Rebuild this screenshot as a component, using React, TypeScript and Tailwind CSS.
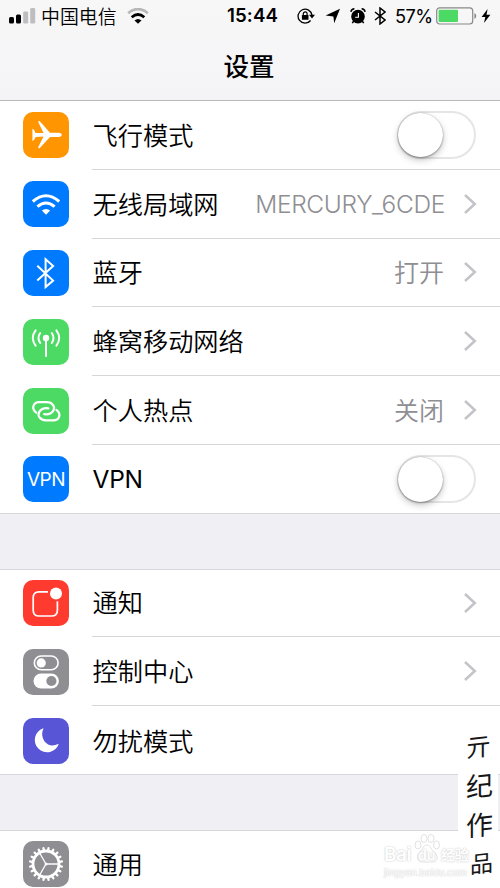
import React from 'react';

const sans = "font-['Inter','Noto_Sans_CJK_SC',sans-serif]";

function StatusBar() {
  return (
    <div className="flex h-8 items-center text-black">
      <svg className="ml-[9px] h-4 w-[27px] shrink-0" viewBox="0 0 27 16">
        <rect x="0" y="9" width="5" height="6.5" rx="1.5" />
        <rect x="7" y="6.5" width="5" height="9" rx="1.5" />
        <rect x="14.2" y="3.5" width="5" height="12" rx="1.3" fill="#bebec0" />
        <rect x="21.2" y="0" width="5" height="15.5" rx="1.3" fill="#bebec0" />
      </svg>
      <span className="ml-[5px] w-[76px] shrink-0 whitespace-nowrap pt-[3px] text-[18.9px] font-[350] leading-8">中国电信</span>
      <svg className="ml-[10px] h-4 w-[22px] shrink-0" viewBox="0 0 22 16">
        <path d="M1.2 5.2C7-.3 15-.3 20.8 5.2" fill="none" stroke="#b7b7b8" strokeWidth="2.7" />
        <path d="M4.7 9.2Q11 3.8 17.3 9.2" fill="none" stroke="#000" strokeWidth="2.8" />
        <path d="M7.5 12.4Q11 9.4 14.5 12.4L11 15.7Z" />
      </svg>
      <span className="ml-[78px] w-[53px] shrink-0 whitespace-nowrap pt-px text-[18.7px] font-semibold tracking-[0.1px]">15:44</span>
      <svg className="ml-[17px] h-4 w-[18px] shrink-0" viewBox="0 0 18 16">
        <path d="M13.6 12.5A7 7 0 1 1 15 7.2" fill="none" stroke="#000" strokeWidth="1.3" />
        <path d="M12 6.7h6L15 10.5Z" />
        <rect x="4.9" y="7" width="6.6" height="4.8" rx=".6" />
        <path d="M6.3 7.3V5.8a1.9 1.9 0 0 1 3.8 0v1.5" fill="none" stroke="#000" strokeWidth="1.2" />
      </svg>
      <svg className="ml-[10px] h-4 w-[16px] shrink-0" viewBox="0 0 16 16">
        <path d="M15 .8 9.2 15.3 8.4 8.4 .6 7.6Z" />
      </svg>
      <svg className="ml-[9px] h-4 w-[16px] shrink-0" viewBox="0 0 16 16">
        <circle cx="8" cy="8.6" r="6.8" />
        <path d="M.9 3.8Q1.4 1 4.4.8M15.1 3.8Q14.6 1 11.6.8M3.8 13l-1.5 2.2M12.2 13l1.5 2.2" stroke="#000" strokeWidth="1.5" fill="none" />
        <path d="M8.4 5v4.3H5.2" fill="none" stroke="#fff" strokeWidth="1.1" />
      </svg>
      <svg className="ml-[8px] h-[18px] w-[12px] shrink-0" viewBox="0 0 12 18">
        <path d="M1 5l10 8-5 4V1l5 4L1 13" fill="none" stroke="#000" strokeWidth="1.5" />
      </svg>
      <span className="ml-[9px] w-[38px] shrink-0 whitespace-nowrap pt-px text-[18.2px] tracking-[-0.5px]">57%</span>
      <svg className="ml-[3px] h-[18px] w-[41px] shrink-0" viewBox="0 0 41 18">
        <rect x=".7" y=".8" width="36" height="16.2" rx="3" fill="none" stroke="#88888a" strokeWidth="1.2" />
        <rect x="2.6" y="2.8" width="19.4" height="12.2" rx="1" fill="#4cd964" />
        <path d="M38.4 6v6q1.9-1 1.9-3t-1.9-3Z" fill="#88888a" />
      </svg>
      <svg className="ml-[4px] h-4 w-[10px] shrink-0" viewBox="0 0 10 16">
        <path d="M6.6 1 .6 9h3.7L3 15 9.4 6.8H5.5Z" />
      </svg>
    </div>
  );
}

function Glyph({ kind }: { kind: string }) {
  const line = { fill: 'none', stroke: '#fff', strokeLinecap: 'round' as const, strokeLinejoin: 'round' as const };
  return (
    <svg className="size-full" viewBox="0 0 46 46" fill="#fff">
      {kind === 'plane' && (
        <path d="M9.4 16.7q1.6.2 3.2 4.2l7.9.2L15.3 10.2q-.3-1.5 1.3-1.3L27 20.7h9q2.9.3 2.9 2.1t-2.9 2.1h-9L16.6 36.2q-1.7.3-1.3-1.2L20.5 24.6l-7.9.3q-1.4 3.6-3.2 4.2Z" />
      )}
      {kind === 'wifi' && (
        <>
          <path {...line} strokeLinecap="butt" strokeWidth="3" d="M9.8 20.5Q23 9 36.2 20.5" />
          <path {...line} strokeLinecap="butt" strokeWidth="3" d="M14.4 25.7Q23 18.3 31.6 25.7" />
          <path d="M18.8 29.6q4.2-3.4 8.4 0L23 33.8Z" />
        </>
      )}
      {kind === 'bluetooth' && <path {...line} strokeLinecap="butt" strokeLinejoin="miter" strokeWidth="2" d="M14.3 15.8l15.8 14.8-7.5 6.4V9.3l7.5 6.7L14.3 30.6" />}
      {kind === 'cell' && (
        <>
          <circle cx="23" cy="19" r="3.2" />
          <path {...line} strokeWidth="2" d="M23 20v17" />
          <path {...line} strokeWidth="2" d="M17.2 14q-3.4 5 0 10M28.8 14q3.4 5 0 10M12.6 11.4q-5.6 7.6 0 15.2M33.4 11.4q5.6 7.6 0 15.2" />
        </>
      )}
      {kind === 'link' && (
        <g {...line} strokeWidth="2.2">
          <path d="M13.2 24.6C8.3 21 9.6 14.2 16.4 14.2h7.2C29.8 14.2 32.6 19 30.2 22.8c-1.8 2.8-4.6 4-9 3.4" />
          <path d="M33.4 21.9C38.3 25.5 37 32.3 30.2 32.3H23C16.8 32.3 14 27.5 16.4 23.7c1.8-2.8 4.6-4 9-3.4" />
        </g>
      )}
      {kind === 'notice' && (
        <>
          <path {...line} strokeLinecap="butt" strokeWidth="1.7" d="M25 11.8H16q-5.8 0-5.8 5.8v12.6q0 5.8 5.8 5.8h12.6q5.8 0 5.8-5.8V21.2" />
          <circle cx="33" cy="13.4" r="6" />
        </>
      )}
      {kind === 'toggles' && (
        <>
          <rect {...line} strokeWidth="1.6" x="11.3" y="7" width="23.8" height="13.8" rx="6.9" />
          <circle cx="18.2" cy="13.9" r="4.6" />
          <rect x="10.5" y="24.5" width="25.4" height="15" rx="7.5" />
          <circle cx="28.4" cy="32" r="5.1" fill="#8e8e93" />
        </>
      )}
      {kind === 'moon' && <path d="M20.5 10.2A12.3 12.3 0 1 0 35.8 25.7Q27 30.2 21.4 23.2 17.4 17.3 20.5 10.2Z" />}
      {kind === 'gear' && (
        <>
          <circle {...line} cx="23" cy="23" r="13" strokeWidth="2.8" />
          <g {...line} strokeWidth="2.3">
            {Array.from({ length: 20 }, (_, i) => (
              <path key={i} d="M23 8.8V6.9" transform={`rotate(${i * 18 + 9} 23 23)`} />
            ))}
          </g>
          <path {...line} strokeWidth="1.3" d="M23 23h13M23 23l-6.5-11.3M23 23l-6.5 11.3" />
          <circle cx="23" cy="23" r="1.5" />
        </>
      )}
    </svg>
  );
}

function Toggle() {
  return (
    <div className="mr-[24px] h-12 w-[79px] rounded-full border-2 border-[#e5e5e6] bg-white">
      <div className="-ml-px size-[44.5px] rounded-full bg-white shadow-[0_3px_7px_rgba(0,0,0,0.23),0_1px_2px_rgba(0,0,0,0.3),0_0_1px_rgba(0,0,0,0.3)]" />
    </div>
  );
}

type RowProps = { kind: string; color: string; label: string; value?: string; toggle?: boolean; arrow?: boolean; last?: boolean };

function Row({ kind, color, label, value, toggle, arrow, last }: RowProps) {
  const latinLabel = kind === 'vpn';
  const latinValue = kind === 'wifi';
  return (
    <div className="flex h-[68.8px] pl-[23px]">
      <div className="flex shrink-0 items-center">
        <div className={`flex size-[46px] items-center justify-center overflow-hidden rounded-[10px] text-white ${color}`}>
          {kind === 'vpn' ? <span className="pt-px text-[19px] font-normal tracking-[-0.6px]">VPN</span> : <Glyph kind={kind} />}
        </div>
      </div>
      <div className={`ml-[23px] flex min-w-0 flex-1 items-center ${last ? '' : 'border-b border-[#d6d6d8]'}`}>
        <span
          className={`flex-1 whitespace-nowrap pl-[0.6px] leading-none text-black ${
            latinLabel ? 'text-[24.5px] tracking-[-0.3px]' : 'pt-[3px] text-[25.2px] font-[350]'
          }`}
        >
          {label}
        </span>
        {value && (
          <span
            className={`whitespace-nowrap leading-none text-[#8e8e93] ${
              latinValue ? '-mr-px pt-px text-[24.5px] font-[350] tracking-[-0.35px]' : 'pt-[3px] text-[25px] font-[350]'
            }`}
          >
            {value}
          </span>
        )}
        {arrow && (
          <svg className="ml-[19px] mr-[23px] h-6 w-[14px]" viewBox="0 0 14 24">
            <path d="M2 3l9.8 9L2 21" fill="none" stroke="#c3c3c8" strokeWidth="2.5" />
          </svg>
        )}
        {toggle && <Toggle />}
      </div>
    </div>
  );
}

function Watermark() {
  return (
    <div className="absolute left-[384px] top-[833px] h-[55px] w-[86px] text-white [text-shadow:0_0_2px_#cfcfcf,0_0_1px_#d4d4d4]">
      <svg className="absolute left-[30px] top-0 h-8 w-[26px]" viewBox="0 0 26 32" fill="#fff" stroke="#e2e2e2">
        <ellipse cx="4" cy="12" rx="3" ry="4" />
        <ellipse cx="10" cy="5.5" rx="3" ry="4" />
        <ellipse cx="17" cy="5.5" rx="3" ry="4" />
        <ellipse cx="22.5" cy="12" rx="3" ry="4" />
        <path d="M13 12c-4 0-4 4-7 7s-4 10 2 10h10c7 0 6-7 2-10s-3-7-7-7Z" />
      </svg>
      <div className="relative flex pt-[12px] font-semibold leading-5">
        <span className="w-[31px] text-[19px] tracking-[-0.5px]">Bai</span>
        <span className="w-[26px] pl-[3px] text-[14px]">du</span>
        <span className="whitespace-nowrap text-[14px]">经验</span>
      </div>
      <div className="mt-px whitespace-nowrap text-[9.6px] leading-[14px]">jingyan.baidu.com</div>
    </div>
  );
}

export default function App() {
  return (
    <div className={`relative h-[888px] w-[500px] overflow-hidden bg-[#efeff4] ${sans}`}>
      <header className="h-[101px] border-b border-[#b9b9bc] bg-gradient-to-b from-[#f8f7f7] to-[#f4f4f7]">
        <StatusBar />
        <h1 className="pr-[2px] pt-[17px] text-center text-[25.5px] font-medium leading-9 text-black">设置</h1>
      </header>
      <section className="h-[413px] border-b border-[#d5d5da] bg-white">
        <Row kind="plane" color="bg-[#ff9500]" label="飞行模式" toggle />
        <Row kind="wifi" color="bg-[#007aff]" label="无线局域网" value="MERCURY_6CDE" arrow />
        <Row kind="bluetooth" color="bg-[#007aff]" label="蓝牙" value="打开" arrow />
        <Row kind="cell" color="bg-[#4cd964]" label="蜂窝移动网络" arrow />
        <Row kind="link" color="bg-[#4cd964]" label="个人热点" value="关闭" arrow />
        <Row kind="vpn" color="bg-[#007aff]" label="VPN" toggle last />
      </section>
      <section className="mt-[55px] h-[206px] border-y border-[#d5d5da] bg-white">
        <div className="-mt-[1.4px]">
          <Row kind="notice" color="bg-[#ff3b30]" label="通知" arrow />
          <Row kind="toggles" color="bg-[#8e8e93]" label="控制中心" arrow />
          <Row kind="moon" color="bg-[#5856d6]" label="勿扰模式" last />
        </div>
      </section>
      <section className="mt-[55px] h-[69px] border-t border-[#d5d5da] bg-white">
        <div className="-mt-[1.5px]">
          <Row kind="gear" color="bg-[#8e8e93]" label="通用" last />
        </div>
      </section>
      <div className="absolute left-[458px] top-[728px] flex h-[160px] w-10 flex-col items-center bg-white pl-[2px] text-[25px] font-normal leading-[39px] text-[#161616]">
        <span className="-skew-y-6">亓</span>
        <span className="-skew-y-6 text-[27px]">纪</span>
        <span className="-skew-y-6 text-[27px]">作</span>
        <span className="ml-[4px] -skew-y-6 text-[23px]">品</span>
      </div>
      <Watermark />
    </div>
  );
}
